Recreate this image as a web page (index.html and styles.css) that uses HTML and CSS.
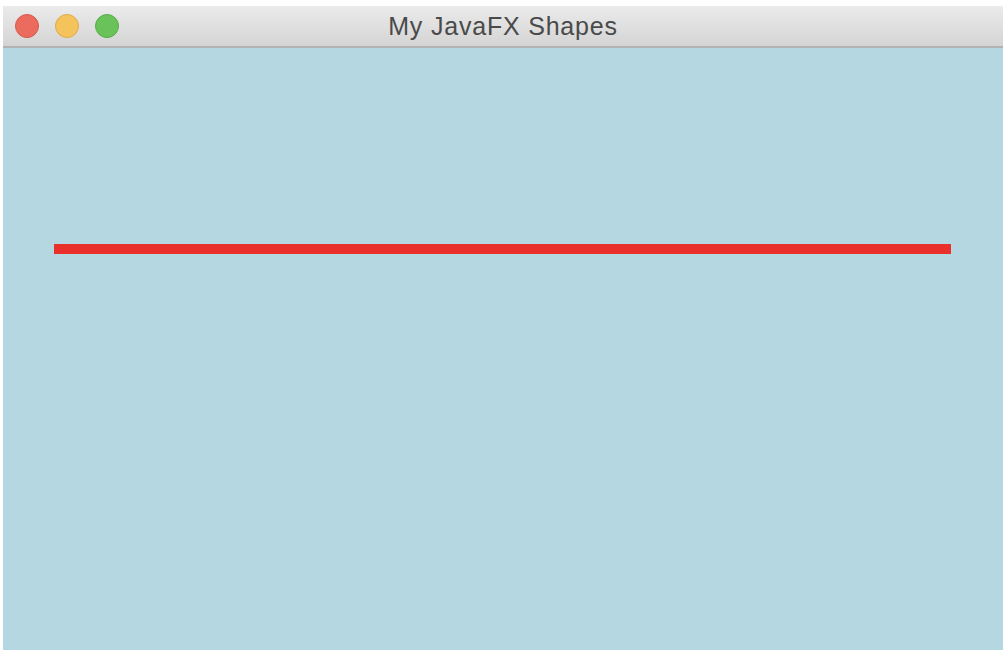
FILE: index.html
```html
<!DOCTYPE html>
<html lang="en">
<head>
    <meta charset="UTF-8">
    <meta name="viewport" content="width=device-width, initial-scale=1.0">
    <title>My JavaFX Shapes</title>
    <link rel="stylesheet" href="styles.css">
</head>
<body>
    <div class="window">
        <div class="titlebar">
            <div class="lights">
                <span class="light close"></span>
                <span class="light minimize"></span>
                <span class="light zoom"></span>
            </div>
            <div class="title">My JavaFX Shapes</div>
        </div>
        <div class="scene">
            <div class="line"></div>
        </div>
    </div>
</body>
</html>
```

FILE: styles.css
```css
body {
    font-family: "Liberation Sans", Arial, sans-serif;
    background-color: #FFFFFF;
    margin: 0;
    padding: 6px 5px 0 3px;
}
.window {
    width: 1000px;
    display: flex;
    flex-direction: column;
}
.titlebar {
    height: 40px;
    background: linear-gradient(#ebebeb, #d4d4d4);
    border-bottom: 2px solid #b2b2b2;
    display: flex;
    align-items: center;
    position: relative;
}
.lights {
    display: flex;
    gap: 16px;
    padding-left: 12px;
}
.light {
    width: 24px;
    height: 24px;
    border-radius: 50%;
    box-sizing: border-box;
}
.close {
    background: #ec6b5f;
    border: 1px solid #d8584d;
}
.minimize {
    background: #f5c35c;
    border: 1px solid #dfaa45;
}
.zoom {
    background: #6ac35a;
    border: 1px solid #57ab48;
}
.title {
    position: absolute;
    left: 0;
    right: 0;
    text-align: center;
    font-size: 25px;
    letter-spacing: 0.8px;
    color: #4a4a4a;
}
.scene {
    height: 602px;
    background: #b5d7e2;
    display: flex;
    flex-direction: column;
}
.line {
    margin: 196px 0 0 51px;
    width: 897px;
    height: 10px;
    background: #e9302a;
}
```
